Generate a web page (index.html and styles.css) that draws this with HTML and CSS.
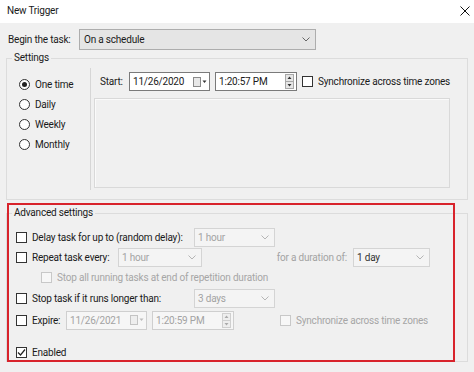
FILE: index.html
```html
<!DOCTYPE html>
<html lang="en">
<head>
    <meta charset="UTF-8">
    <title>New Trigger</title>
    <link rel="stylesheet" href="styles.css">
</head>
<body>
    <div class="titlebar">
        <span class="title">New Trigger</span>
        <svg class="close" width="10" height="10" viewBox="0 0 10 10"><path d="M0.5 0.5L9.5 9.5M9.5 0.5L0.5 9.5" stroke="#111" stroke-width="1"/></svg>
    </div>

    <div class="dialog">
        <div class="begin-row">
            <span class="begin-label">Begin the task:</span>
            <div class="combo begin-combo">
                <span>On a schedule</span>
                <svg class="chev" width="8" height="5" viewBox="0 0 8 5"><path d="M0.5 0.5L4 4L7.5 0.5" fill="none" stroke="#666"/></svg>
            </div>
        </div>

        <!-- Settings -->
        <fieldset class="group settings">
            <legend>Settings</legend>
            <div class="settings-body">
                <div class="radios">
                    <div class="radio"><span class="dot on"></span>One time</div>
                    <div class="radio"><span class="dot"></span>Daily</div>
                    <div class="radio"><span class="dot"></span>Weekly</div>
                    <div class="radio"><span class="dot"></span>Monthly</div>
                </div>
                <div class="sched">
                    <div class="start-row">
                        <span class="start-label">Start:</span>
                        <div class="picker date-picker">
                            <span>11/26/2020</span>
                            <span class="cal-btn">
                                <svg width="14" height="10" viewBox="0 0 14 10"><rect x="0.5" y="0.5" width="7" height="9" fill="#e8e8e8" stroke="#8a8a8a"/><path d="M9.5 3.5h4l-2 2.5z" fill="#333"/></svg>
                            </span>
                        </div>
                        <div class="picker time-picker">
                            <span>1:20:57 PM</span>
                            <span class="spin">
                                <svg width="9" height="15" viewBox="0 0 9 15"><rect x="0.5" y="0.5" width="8" height="14" fill="#e6e6e6" stroke="#a8a8a8"/><path d="M0.5 7.5h8" stroke="#a8a8a8"/><path d="M2.5 5h4l-2-2.5z M2.5 10h4l-2 2.5z" fill="#333"/></svg>
                            </span>
                        </div>
                        <div class="check-label sync"><span class="box"></span>Synchronize across time zones</div>
                    </div>
                    <div class="panel"></div>
                </div>
            </div>
        </fieldset>

        <!-- Advanced settings -->
        <fieldset class="group advanced">
            <legend>Advanced settings</legend>
            <div class="row">
                <div class="check-label w-long"><span class="box"></span>Delay task for up to (random delay):</div>
                <div class="combo off w-81"><span>1 hour</span><svg class="chev" width="8" height="5" viewBox="0 0 8 5"><path d="M0.5 0.5L4 4L7.5 0.5" fill="none" stroke="#b5b5b5"/></svg></div>
            </div>
            <div class="row">
                <div class="check-label w-repeat"><span class="box"></span>Repeat task every:</div>
                <div class="combo off w-84"><span>1 hour</span><svg class="chev" width="8" height="5" viewBox="0 0 8 5"><path d="M0.5 0.5L4 4L7.5 0.5" fill="none" stroke="#b5b5b5"/></svg></div>
                <span class="duration-label">for a duration of:</span>
                <div class="combo off w-77 dark"><span>1 day</span><svg class="chev" width="8" height="5" viewBox="0 0 8 5"><path d="M0.5 0.5L4 4L7.5 0.5" fill="none" stroke="#b5b5b5"/></svg></div>
            </div>
            <div class="row indent">
                <div class="check-label disabled"><span class="box"></span>Stop all running tasks at end of repetition duration</div>
            </div>
            <div class="row tall">
                <div class="check-label w-long"><span class="box"></span>Stop task if it runs longer than:</div>
                <div class="combo off w-81"><span>3 days</span><svg class="chev" width="8" height="5" viewBox="0 0 8 5"><path d="M0.5 0.5L4 4L7.5 0.5" fill="none" stroke="#b5b5b5"/></svg></div>
            </div>
            <div class="row tall">
                <div class="check-label w-expire"><span class="box"></span>Expire:</div>
                <div class="picker off date-picker">
                    <span>11/26/2021</span>
                    <span class="cal-btn">
                        <svg width="14" height="10" viewBox="0 0 14 10"><rect x="0.5" y="0.5" width="7" height="9" fill="#eee" stroke="#c4c4c4"/><path d="M9.5 3.5h4l-2 2.5z" fill="#bbb"/></svg>
                    </span>
                </div>
                <div class="picker off time-picker">
                    <span>1:20:59 PM</span>
                    <span class="spin">
                        <svg width="9" height="15" viewBox="0 0 9 15"><rect x="0.5" y="0.5" width="8" height="14" fill="#eee" stroke="#cfcfcf"/><path d="M0.5 7.5h8" stroke="#cfcfcf"/><path d="M2.5 5h4l-2-2.5z M2.5 10h4l-2 2.5z" fill="#aaa"/></svg>
                    </span>
                </div>
                <div class="check-label disabled expire-sync"><span class="box"></span>Synchronize across time zones</div>
            </div>
            <div class="row enabled-row">
                <div class="check-label"><span class="box checked"><svg width="9" height="9" viewBox="0 0 9 9"><path d="M1 4.5L3.5 7L8 1.5" fill="none" stroke="#222" stroke-width="1.2"/></svg></span>Enabled</div>
            </div>
        </fieldset>

        <!-- annotation drawn over the dialog -->
        <div class="highlight"></div>
    </div>
</body>
</html>
```

FILE: styles.css
```css
body {
    margin: 0;
    padding: 0;
    width: 474px;
    height: 372px;
    overflow: hidden;
    background-color: #f0f0f0;
    color: #1a1a1a;
    font-family: Roboto, "Noto Sans", sans-serif;
    font-size: 10px;
    letter-spacing: -0.2px;
}

/* Title bar */
.titlebar {
    height: 23px;
    background-color: #fff;
    display: flex;
    align-items: center;
    justify-content: space-between;
    padding: 0 4px 2px 7px;
    box-sizing: border-box;
}

.dialog {
    position: relative;
    padding: 0 6px;
}

/* Begin row */
.begin-row {
    display: flex;
    align-items: center;
    padding-top: 6px;
    height: 21px;
}

.begin-label {
    width: 71px;
    padding-left: 2px;
}

.combo {
    height: 21px;
    box-sizing: border-box;
    border: 1px solid #adadad;
    background-color: #e5e5e5;
    display: flex;
    align-items: center;
    justify-content: space-between;
    padding: 0 5px 0 4px;
}

.begin-combo {
    width: 237px;
}

.combo.off {
    height: 19px;
    background-color: #f4f4f4;
    border-color: #d4d4d4;
    color: #a3a3a3;
    padding-left: 3px;
}

.combo.dark {
    color: #333;
}

.w-81 { width: 81px; }
.w-84 { width: 84px; }
.w-77 { width: 77px; }

/* Group boxes */
.group {
    margin: 0;
    padding: 0;
    border: 1px solid #dcdcdc;
}

.group legend {
    margin-left: 5px;
    padding: 0 2px;
    line-height: 14px;
}

.settings {
    margin-top: 1px;
    height: 147px;
}

.settings-body {
    display: flex;
    padding-top: 3px;
}

.radios {
    width: 84px;
    height: 122px;
    border-right: 1px solid #d6d6d6;
    padding-top: 6px;
    box-sizing: border-box;
}

.radio {
    height: 20px;
    display: flex;
    align-items: center;
    padding-left: 12px;
}

.dot {
    width: 11px;
    height: 11px;
    border: 1px solid #333;
    border-radius: 50%;
    background: #fff;
    margin-right: 5px;
    position: relative;
    box-sizing: border-box;
}

.dot.on::after {
    content: "";
    position: absolute;
    left: 2px;
    top: 2px;
    width: 5px;
    height: 5px;
    border-radius: 50%;
    background: #222;
}

.sched {
    padding-left: 6px;
    padding-top: 4px;
}

.start-row {
    display: flex;
    align-items: center;
    padding-left: 3px;
    height: 19px;
}

.start-label {
    width: 29px;
}

.picker {
    height: 19px;
    box-sizing: border-box;
    border: 1px solid #7a7a7a;
    background: #fff;
    display: flex;
    align-items: center;
    justify-content: space-between;
    padding: 0 2px 0 3px;
}

.date-picker {
    width: 81px;
}

.time-picker {
    width: 82px;
    margin-left: 5px;
}

.picker.off {
    border-color: #cfcfcf;
    background: #f6f6f6;
    color: #a3a3a3;
}

.cal-btn {
    display: flex;
}

.spin {
    display: flex;
}

.panel {
    margin-top: 7px;
    margin-left: -3px;
    width: 356px;
    height: 90px;
    box-sizing: border-box;
    border: 1px solid #d9d9d9;
    box-shadow: inset 1px 1px 0 #fafafa;
}

/* Checkboxes */
.check-label {
    display: flex;
    align-items: center;
    white-space: nowrap;
}

.box {
    width: 11px;
    height: 11px;
    box-sizing: border-box;
    border: 1px solid #333;
    background: #fff;
    margin-right: 5px;
    display: flex;
    align-items: center;
    justify-content: center;
    flex-shrink: 0;
}

.check-label.disabled {
    color: #a6a6a6;
}

.check-label.disabled .box {
    border-color: #c8c8c8;
    background: #f7f7f7;
}

.sync {
    margin-left: 5px;
}

/* Advanced rows */
.advanced {
    margin-top: 6px;
    height: 154px;
}

.advanced .row:first-of-type {
    margin-top: 7px;
}

.row {
    display: flex;
    align-items: center;
    height: 20px;
    padding-left: 9px;
}

.row.tall {
    height: 22px;
}

.row.indent {
    padding-left: 34px;
}

.row.enabled-row {
    margin-top: 11px;
}

.w-long { width: 178px; }
.w-repeat { width: 102px; }
.w-expire { width: 50px; }

.duration-label {
    width: 145px;
    text-align: right;
    padding-right: 6px;
    color: #a3a3a3;
}

.expire-sync {
    margin-left: 46px;
}

/* Red annotation frame */
.highlight {
    position: absolute;
    left: 7px;
    top: 180px;
    width: 448px;
    height: 159px;
    box-sizing: border-box;
    border: 2px solid #d8232b;
}
```
